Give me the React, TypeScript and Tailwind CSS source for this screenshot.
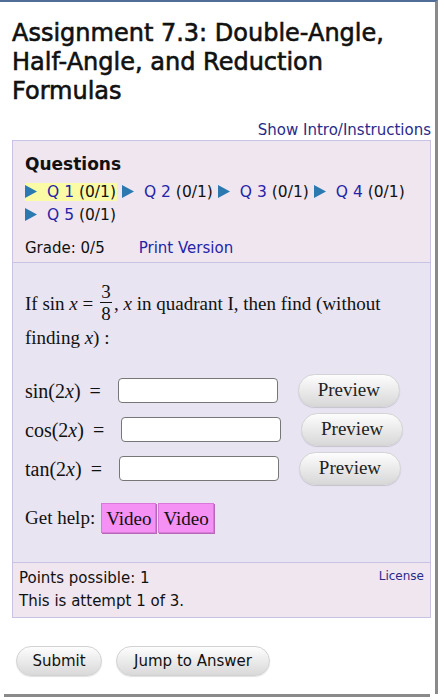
const sans = { fontFamily: '"DejaVu Sans", Verdana, sans-serif' }
const serif = { fontFamily: '"Liberation Serif", "Times New Roman", serif' }

function Tri() {
  return (
    <svg width="12" height="13" viewBox="0 0 12 13" className="inline-block mr-[10px] align-[-1px]">
      <polygon points="0,0 12,6.5 0,13" fill="#2a79b0" />
    </svg>
  )
}

function QLink({ n, hi }: { n: number; hi?: boolean }) {
  return (
    <span className={hi ? 'bg-[#fbfba6] pr-[1px]' : ''}>
      <Tri />
      <span className="text-[#2424a8]">Q {n}</span> (0/1)
    </span>
  )
}

function PreviewBtn() {
  return (
    <button
      className="h-[33px] w-[102px] rounded-full border border-[#d4d4d4] bg-gradient-to-b from-[#fdfdfd] to-[#d8d8d8] text-[19px] text-[#222] shadow-[0_1px_1px_rgba(0,0,0,0.15)]"
      style={serif}
    >
      Preview
    </button>
  )
}

function Row({ fn }: { fn: string }) {
  return (
    <div className="flex items-center h-[39px] text-[20px]">
      <span>
        {fn}(2<i>x</i>)
      </span>
      <span className="ml-[9px]">=</span>
      <input className="ml-[17px] w-[160px] h-[25px] rounded-[4px] border border-[#777] bg-white" />
      <span className="ml-[20px]">
        <PreviewBtn />
      </span>
    </div>
  )
}

export default function App() {
  return (
    <div className="relative w-[444px] h-[700px] bg-white overflow-hidden text-[#111]">
      <div className="w-[438px] h-[694px] border-t-2 border-r-[3px] border-t-[#4f6d96] border-r-[#8a8a8a]">
        <div className="pl-[12px] pr-[4px]">
          <h1
            className="pt-[17px] text-[24px] leading-[29px] font-normal [-webkit-text-stroke:0.6px_#111]"
            style={sans}
          >
            Assignment 7.3: Double-Angle, Half-Angle, and Reduction Formulas
          </h1>

          <div className="mt-[14px] text-right text-[15px] leading-[20px] text-[#2a2a8a]" style={sans}>
            Show Intro/Instructions
          </div>

          {/* Questions nav */}
          <div className="border border-[#c9c3e3] bg-[#efe6f0] px-[12px] pt-[12px] pb-[3px] text-[15px]" style={sans}>
            <div className="text-[17px] font-bold leading-[22px]">Questions</div>
            <div className="mt-[6px] leading-[23px] text-[15.5px]">
              <QLink n={1} hi /> <QLink n={2} /> <QLink n={3} /> <QLink n={4} />
              <br />
              <QLink n={5} />
            </div>
            <div className="mt-[10px] leading-[22px]">
              Grade: 0/5<span className="ml-[34px] text-[#2424a8]">Print Version</span>
            </div>
          </div>

          {/* Question body */}
          <div className="border border-t-0 border-[#c9c3e3] bg-[#e8e4f2] px-[12px] pt-[23px] pb-[29px]" style={serif}>
            <div className="text-[19px] leading-[26px]">
              If sin <i>x</i> ={' '}
              <span className="relative -top-[3px] inline-flex flex-col items-center align-middle text-[19px] leading-[17px] mx-[2px]">
                <span>3</span>
                <span className="block w-[12px] border-t border-[#111] my-[2px]"></span>
                <span>8</span>
              </span>
              , <i>x</i> in quadrant I, then find (without finding <i>x</i>) :
            </div>

            <div className="mt-[20px]">
              <Row fn="sin" />
              <Row fn="cos" />
              <Row fn="tan" />
            </div>

            <div className="mt-[15px] flex items-center text-[19px]">
              <span>Get help:</span>
              <span className="ml-[6px] bg-[#f590f5] border border-[#d878d8] shadow-[1px_1px_0_#b868b8] px-[4px] h-[30px] leading-[30px]">
                Video
              </span>
              <span className="ml-[2px] bg-[#f590f5] border border-[#d878d8] shadow-[1px_1px_0_#b868b8] px-[4px] h-[30px] leading-[30px]">
                Video
              </span>
            </div>
          </div>

          {/* Footer info */}
          <div
            className="relative border border-t-0 border-[#c9c3e3] bg-[#efe6f0] px-[6px] pt-[4px] pb-[4px] text-[15px] leading-[23px]"
            style={sans}
          >
            <div>Points possible: 1</div>
            <div>This is attempt 1 of 3.</div>
            <span className="absolute right-[6px] top-[5px] text-[12px] leading-[16px] text-[#2a2a8a]">License</span>
          </div>

          <div className="mt-[28px] flex gap-[14px] text-[15px]" style={sans}>
            <button className="ml-[4px] h-[30px] w-[86px] rounded-full border border-[#d2d2d2] bg-gradient-to-b from-[#fdfdfd] to-[#d9d9d9] shadow-[0_1px_1px_rgba(0,0,0,0.12)]">
              Submit
            </button>
            <button className="h-[30px] w-[154px] rounded-full border border-[#d2d2d2] bg-gradient-to-b from-[#fdfdfd] to-[#d9d9d9] shadow-[0_1px_1px_rgba(0,0,0,0.12)]">
              Jump to Answer
            </button>
          </div>
        </div>
      </div>
      <div className="ml-[4px] w-[426px] h-[3px] bg-[#8a8a8a]"></div>
    </div>
  )
}
